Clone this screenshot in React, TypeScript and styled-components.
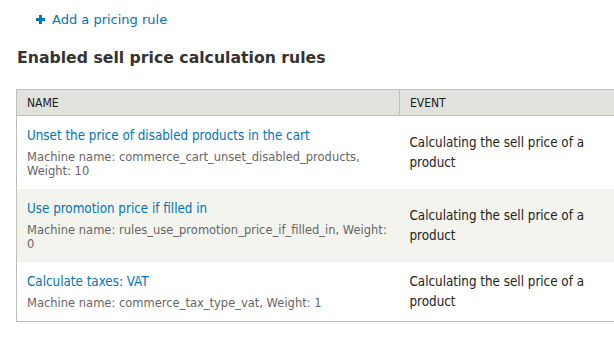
import styled, { createGlobalStyle } from "styled-components";

const GlobalStyle = createGlobalStyle`
  html, body {
    margin: 0;
    padding: 0;
    background: #fff;
    overflow: hidden;
  }
  body {
    font-family: "DejaVu Sans", Verdana, sans-serif;
    color: #333;
  }
`;

const Page = styled.div`
  width: 614px;
  height: 344px;
  overflow: hidden;
  padding-left: 16px;
  box-sizing: border-box;
`;

const ActionList = styled.ul`
  list-style: none;
  margin: 0;
  padding: 9px 0 0 20px;
`;

const ActionLink = styled.a`
  display: inline-flex;
  align-items: center;
  gap: 7px;
  color: #0074bd;
  font-size: 13px;
  text-decoration: none;
  line-height: 16px;
`;

const Heading = styled.h2`
  margin: 20px 0 0 1px;
  font-size: 15.7px;
  font-weight: bold;
  color: #333;
  line-height: 20px;
`;

const Table = styled.table`
  margin-top: 21px;
  width: 606px;
  border-collapse: collapse;
  border: 1px solid #bfbfba;
  table-layout: fixed;
  font-family: "DejaVu Sans Condensed", "DejaVu Sans", sans-serif;
`;

const HeadCell = styled.th<{ $divider?: boolean }>`
  background: #e1e2dc;
  border-bottom: 1px solid #bfbfba;
  border-left: ${({ $divider }) => ($divider ? "1px solid #bfbfba" : "none")};
  text-align: left;
  font-weight: normal;
  text-transform: uppercase;
  font-size: 12px;
  color: #1a1a1a;
  height: 26px;
  padding: 0 10px;
  box-sizing: border-box;
`;

const Row = styled.tr<{ $alt?: boolean }>`
  background: ${({ $alt }) => ($alt ? "#f3f4ee" : "#fff")};
`;

const NameCell = styled.td`
  padding: 11px 10px 11px;
  vertical-align: middle;
`;

const EventCell = styled.td`
  padding: 9px 10px;
  vertical-align: middle;
`;

const RuleLink = styled.a`
  display: block;
  color: #0074bd;
  font-size: 13.3px;
  text-decoration: none;
  line-height: 18px;
`;

const Description = styled.div`
  margin-top: 5px;
  font-family: "DejaVu Sans", sans-serif;
  font-size: 11.5px;
  line-height: 14px;
  color: #666;
`;

const EventText = styled.div`
  font-size: 13.3px;
  line-height: 20px;
  color: #222;
`;

const PlusIcon = () => (
  <svg width="9" height="9" viewBox="0 0 9 9">
    <path d="M3 0h3v3h3v3H6v3H3V6H0V3h3z" fill="#0074bd" />
  </svg>
);

const rules = [
  {
    label: "Unset the price of disabled products in the cart",
    machine: "Machine name: commerce_cart_unset_disabled_products, Weight: 10",
  },
  {
    label: "Use promotion price if filled in",
    machine: "Machine name: rules_use_promotion_price_if_filled_in, Weight: 0",
  },
  {
    label: "Calculate taxes: VAT",
    machine: "Machine name: commerce_tax_type_vat, Weight: 1",
  },
];

export default function App() {
  return (
    <>
      <GlobalStyle />
      <Page>
        <ActionList>
          <li>
            <ActionLink href="#">
              <PlusIcon />
              Add a pricing rule
            </ActionLink>
          </li>
        </ActionList>
        <Heading>Enabled sell price calculation rules</Heading>
        <Table>
          <colgroup>
            <col style={{ width: 383 }} />
            <col />
          </colgroup>
          <thead>
            <tr>
              <HeadCell>Name</HeadCell>
              <HeadCell $divider>Event</HeadCell>
            </tr>
          </thead>
          <tbody>
            {rules.map((rule, i) => (
              <Row key={rule.label} $alt={i % 2 === 1}>
                <NameCell>
                  <RuleLink href="#">{rule.label}</RuleLink>
                  <Description>{rule.machine}</Description>
                </NameCell>
                <EventCell>
                  <EventText>Calculating the sell price of a product</EventText>
                </EventCell>
              </Row>
            ))}
          </tbody>
        </Table>
      </Page>
    </>
  );
}
